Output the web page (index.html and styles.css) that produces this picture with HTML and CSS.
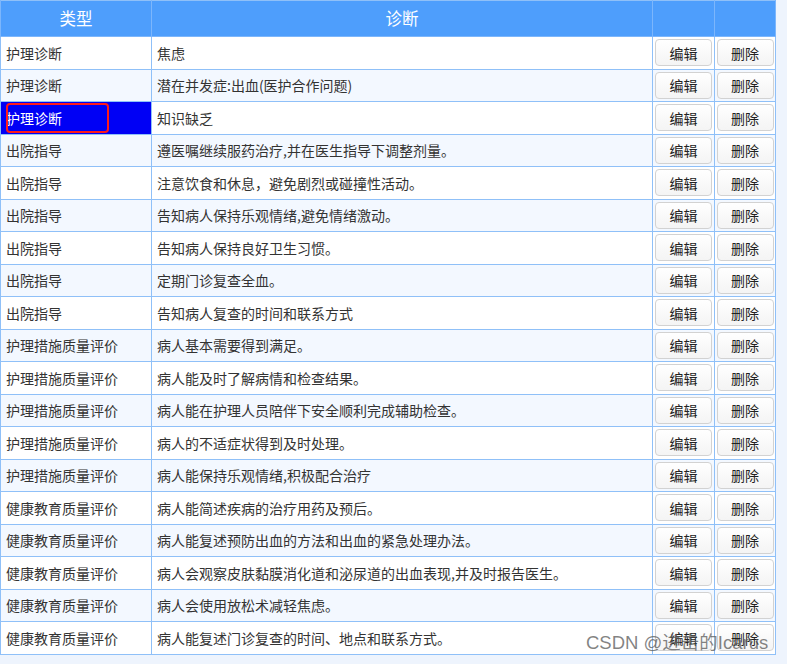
FILE: index.html
```html
<!DOCTYPE html>
<html lang="zh">
<head>
<meta charset="utf-8">
<link rel="stylesheet" href="styles.css">
</head>
<body>
<div class="page">
<table class="grid">
  <colgroup>
    <col class="c-type"><col class="c-diag"><col class="c-btn"><col class="c-btn2">
  </colgroup>
  <thead>
    <tr><th>类型</th><th>诊断</th><th></th><th></th></tr>
  </thead>
  <tbody>
    <tr><td>护理诊断</td><td>焦虑</td><td><button class="btn">编辑</button></td><td><button class="btn">删除</button></td></tr>
    <tr><td>护理诊断</td><td>潜在并发症:出血(医护合作问题)</td><td><button class="btn">编辑</button></td><td><button class="btn">删除</button></td></tr>
    <tr><td class="sel"><span class="mark"></span>护理诊断</td><td>知识缺乏</td><td><button class="btn">编辑</button></td><td><button class="btn">删除</button></td></tr>
    <tr><td>出院指导</td><td>遵医嘱继续服药治疗,并在医生指导下调整剂量。</td><td><button class="btn">编辑</button></td><td><button class="btn">删除</button></td></tr>
    <tr><td>出院指导</td><td>注意饮食和休息，避免剧烈或碰撞性活动。</td><td><button class="btn">编辑</button></td><td><button class="btn">删除</button></td></tr>
    <tr><td>出院指导</td><td>告知病人保持乐观情绪,避免情绪激动。</td><td><button class="btn">编辑</button></td><td><button class="btn">删除</button></td></tr>
    <tr><td>出院指导</td><td>告知病人保持良好卫生习惯。</td><td><button class="btn">编辑</button></td><td><button class="btn">删除</button></td></tr>
    <tr><td>出院指导</td><td>定期门诊复查全血。</td><td><button class="btn">编辑</button></td><td><button class="btn">删除</button></td></tr>
    <tr><td>出院指导</td><td>告知病人复查的时间和联系方式</td><td><button class="btn">编辑</button></td><td><button class="btn">删除</button></td></tr>
    <tr><td>护理措施质量评价</td><td>病人基本需要得到满足。</td><td><button class="btn">编辑</button></td><td><button class="btn">删除</button></td></tr>
    <tr><td>护理措施质量评价</td><td>病人能及时了解病情和检查结果。</td><td><button class="btn">编辑</button></td><td><button class="btn">删除</button></td></tr>
    <tr><td>护理措施质量评价</td><td>病人能在护理人员陪伴下安全顺利完成辅助检查。</td><td><button class="btn">编辑</button></td><td><button class="btn">删除</button></td></tr>
    <tr><td>护理措施质量评价</td><td>病人的不适症状得到及时处理。</td><td><button class="btn">编辑</button></td><td><button class="btn">删除</button></td></tr>
    <tr><td>护理措施质量评价</td><td>病人能保持乐观情绪,积极配合治疗</td><td><button class="btn">编辑</button></td><td><button class="btn">删除</button></td></tr>
    <tr><td>健康教育质量评价</td><td>病人能简述疾病的治疗用药及预后。</td><td><button class="btn">编辑</button></td><td><button class="btn">删除</button></td></tr>
    <tr><td>健康教育质量评价</td><td>病人能复述预防出血的方法和出血的紧急处理办法。</td><td><button class="btn">编辑</button></td><td><button class="btn">删除</button></td></tr>
    <tr><td>健康教育质量评价</td><td>病人会观察皮肤黏膜消化道和泌尿道的出血表现,并及时报告医生。</td><td><button class="btn">编辑</button></td><td><button class="btn">删除</button></td></tr>
    <tr><td>健康教育质量评价</td><td>病人会使用放松术减轻焦虑。</td><td><button class="btn">编辑</button></td><td><button class="btn">删除</button></td></tr>
    <tr><td>健康教育质量评价</td><td>病人能复述门诊复查的时间、地点和联系方式。</td><td><button class="btn">编辑</button></td><td><button class="btn">删除</button></td></tr>
  </tbody>
</table>
<div class="watermark">CSDN @进击的Icarus</div>
</div>
</body>
</html>
```

FILE: styles.css
```css
html, body {
  margin: 0;
  padding: 0;
  background: #eef4fd;
}
.page {
  position: relative;
  width: 787px;
  height: 664px;
  overflow: hidden;
  font-family: "Microsoft YaHei", "Noto Sans CJK SC", "Noto Sans", sans-serif;
}
.grid {
  border-collapse: collapse;
  table-layout: fixed;
  width: 775px;
  margin-left: 0;
  font-size: 14px;
  color: #333;
  border: 1px solid #8fc0f8;
}
.c-type { width: 151px; }
.c-diag { width: 501px; }
.c-btn { width: 62px; }
.c-btn2 { width: 61px; }
.grid th {
  height: 33px;
  padding: 0 0 2px 0;
  background: #4e9efc;
  color: #fff;
  font-weight: normal;
  font-size: 16.5px;
  line-height: 20px;
  text-align: center;
  border: 1px solid #7cb6fc;
  border-top: none;
}
.grid td {
  height: 31.5px;
  padding: 0 0 0 5px;
  border: 1px solid #8fc0f8;
  white-space: nowrap;
  background: #fff;
  line-height: 18px;
}
.grid tbody tr:nth-child(even) td {
  background: #f3f8ff;
}
.grid td:nth-child(3), .grid td:nth-child(4) {
  padding: 0;
  text-align: center;
}
.grid td.sel, .grid tbody tr:nth-child(even) td.sel {
  background: #0000f5;
  color: #fff;
  position: relative;
}
.mark {
  position: absolute;
  left: 5px;
  top: 1px;
  width: 99px;
  height: 26px;
  border: 2px solid #ff1a1a;
  border-radius: 4px;
}
.btn {
  display: block;
  margin: 0 auto;
  width: 57px;
  height: 27px;
  padding: 0;
  font-family: inherit;
  font-size: 14px;
  line-height: 18px;
  color: #222;
  background: linear-gradient(#ffffff, #f4f4f4);
  border: 1px solid #d2d2d2;
  border-radius: 4px;
}
.watermark {
  position: absolute;
  left: 586px;
  top: 632px;
  font-family: "Liberation Sans", "Noto Sans CJK SC", sans-serif;
  font-size: 18.5px;
  line-height: 22px;
  color: rgba(90, 90, 90, 0.75);
  white-space: nowrap;
}
```
